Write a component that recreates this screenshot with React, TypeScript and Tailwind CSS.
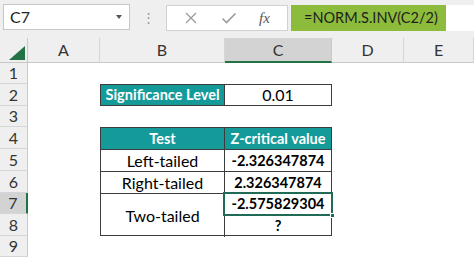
import React from "react";

const font = { fontFamily: "Lato, 'Open Sans', sans-serif" };

const cols = ["A", "B", "C", "D", "E"];
const rows = [1, 2, 3, 4, 5, 6, 7, 8, 9];

export default function App() {
  return (
    <div className="w-[474px] h-[257px] overflow-hidden bg-white text-black" style={font}>
      {/* toolbar */}
      <div className="h-[38px] bg-[#efefef] flex items-start pt-[4px] pl-[3px]">
        <div className="w-[127px] h-[26px] bg-white border border-[#c6c6c6] flex items-center pl-[6px] pr-[7px]">
          <span className="text-[16px] text-[#222] flex-1">C7</span>
          <span className="w-0 h-0 border-l-[3px] border-r-[3px] border-t-[4px] border-l-transparent border-r-transparent border-t-[#555]"></span>
        </div>
        <div className="w-[36px] h-[26px] flex items-center justify-center text-[#9a9a9a] text-[13px] leading-none">
          ⋮
        </div>
        <div className="w-[122px] h-[26px] mt-[1px] bg-white border border-[#d0d0d0] flex items-center justify-around px-[6px]">
          <svg width="14" height="14" viewBox="0 0 14 14" stroke="#9b9b9b" strokeWidth="1.3" fill="none">
            <path d="M2 2 L12 12 M12 2 L2 12" />
          </svg>
          <svg width="16" height="14" viewBox="0 0 16 14" stroke="#9b9b9b" strokeWidth="1.6" fill="none">
            <path d="M1.5 7.5 L5.5 11.5 L14.5 2.5" />
          </svg>
          <span className="text-[15px] text-[#555] italic" style={{ fontFamily: "'Liberation Serif', serif" }}>
            fx
          </span>
        </div>
        <div className="ml-[3px] flex-1 h-[26px] mt-[1px] bg-white flex items-stretch">
          <div className="w-[155px] bg-[#8dbb3c] flex items-center pl-[13px] text-[14.5px] text-[#1e1e1e] whitespace-nowrap">
            =NORM.S.INV(C2/2)
          </div>
        </div>
      </div>

      {/* sheet */}
      <div className="grid grid-cols-[28px_72px_125px_107px_72px_70px] grid-rows-[25px_21px_22px_21px_22px_22px_22px_21px_22px_21px]">
        {/* corner */}
        <div className="bg-[#efefef] border-b border-r border-[#c8c8c8] flex items-end justify-end pr-[2px] pb-[2px]">
          <svg width="16" height="14" viewBox="0 0 16 14">
            <polygon points="16,0 16,14 0,14" fill="#217346" />
          </svg>
        </div>
        {cols.map((c) => (
          <div
            key={c}
            className={`flex items-center justify-center text-[16px] text-[#333] ${
              c === "C"
                ? "bg-[#d3d3d3] border-b-2 border-b-[#217346] border-r border-r-[#c8c8c8]"
                : "bg-[#efefef] border-b border-b-[#c8c8c8] border-r border-r-[#d6d6d6]"
            }`}
          >
            {c}
          </div>
        ))}

        {rows.map((r) => (
          <div
            key={r}
            style={{ gridRow: r + 1, gridColumn: 1 }}
            className={`flex items-center justify-center text-[16px] text-[#333] border-b border-b-[#d6d6d6] ${
              r === 7
                ? "bg-[#d3d3d3] border-r-2 border-r-[#217346]"
                : "bg-[#efefef] border-r border-r-[#c8c8c8]"
            }`}
          >
            {r}
          </div>
        ))}

        {/* significance level */}
        <div className="row-start-3 col-start-3 col-span-2 flex border border-[#3c3c3c]">
          <div className="w-[124px] bg-[#159a9a] border-r border-[#3c3c3c] flex items-center justify-center text-white font-bold text-[14.5px] whitespace-nowrap">
            Significance Level
          </div>
          <div className="flex-1 flex items-center justify-center text-[16px]">0.01</div>
        </div>

        {/* table */}
        <div className="row-start-5 row-span-5 col-start-3 col-span-2 grid grid-cols-[124px_1fr] grid-rows-[22px_22px_22px_21px_22px] border border-[#3c3c3c] text-[16px] whitespace-nowrap">
          <div className="bg-[#159a9a] border-r border-b border-[#3c3c3c] flex items-center justify-center text-white font-bold text-[14.5px]">
            Test
          </div>
          <div className="bg-[#159a9a] border-b border-[#3c3c3c] flex items-center justify-center text-white font-bold text-[14.5px]">
            Z-critical value
          </div>
          <div className="border-r border-b border-[#3c3c3c] flex items-center justify-center">Left-tailed</div>
          <div className="border-b border-[#3c3c3c] flex items-center justify-center font-bold text-[14.5px]">-2.326347874</div>
          <div className="border-r border-b border-[#3c3c3c] flex items-center justify-center">Right-tailed</div>
          <div className="border-b border-[#3c3c3c] flex items-center justify-center font-bold text-[14.5px]">2.326347874</div>
          <div className="row-span-2 border-r border-[#3c3c3c] flex items-center justify-center">Two-tailed</div>
          <div className="relative border-b border-[#3c3c3c] flex items-center justify-center font-bold text-[14.5px]">
            -2.575829304
            <div className="absolute -inset-[2px] border-2 border-[#1f6b55]"></div>
            <div className="absolute -right-[4px] -bottom-[4px] w-[5px] h-[5px] bg-[#1f6b55] border border-white"></div>
          </div>
          <div className="flex items-center justify-center font-bold text-[14.5px]">?</div>
        </div>
      </div>
    </div>
  );
}
